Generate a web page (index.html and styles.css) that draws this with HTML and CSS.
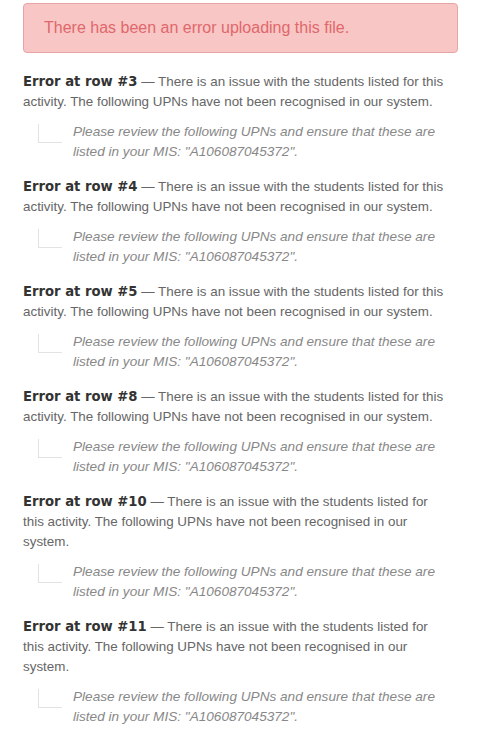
FILE: index.html
```html
<!DOCTYPE html>
<html lang="en">
<head>
    <meta charset="UTF-8">
    <meta name="viewport" content="width=device-width, initial-scale=1.0">
    <title>Upload errors</title>
    <link rel="stylesheet" href="styles.css">
</head>
<body>
    <main class="upload-errors">
        <div class="alert alert-danger">There has been an error uploading this file.</div>

        <div class="error-item">
            <p class="error-text"><strong>Error at row #3</strong> &mdash; There is an issue with the students listed for this activity. The following UPNs have not been recognised in our system.</p>
            <blockquote class="error-note"><span class="note-mark"></span><em>Please review the following UPNs and ensure that these are listed in your MIS: "A106087045372".</em></blockquote>
        </div>

        <div class="error-item">
            <p class="error-text"><strong>Error at row #4</strong> &mdash; There is an issue with the students listed for this activity. The following UPNs have not been recognised in our system.</p>
            <blockquote class="error-note"><span class="note-mark"></span><em>Please review the following UPNs and ensure that these are listed in your MIS: "A106087045372".</em></blockquote>
        </div>

        <div class="error-item">
            <p class="error-text"><strong>Error at row #5</strong> &mdash; There is an issue with the students listed for this activity. The following UPNs have not been recognised in our system.</p>
            <blockquote class="error-note"><span class="note-mark"></span><em>Please review the following UPNs and ensure that these are listed in your MIS: "A106087045372".</em></blockquote>
        </div>

        <div class="error-item">
            <p class="error-text"><strong>Error at row #8</strong> &mdash; There is an issue with the students listed for this activity. The following UPNs have not been recognised in our system.</p>
            <blockquote class="error-note"><span class="note-mark"></span><em>Please review the following UPNs and ensure that these are listed in your MIS: "A106087045372".</em></blockquote>
        </div>

        <div class="error-item">
            <p class="error-text"><strong>Error at row #10</strong> &mdash; There is an issue with the students listed for this activity. The following UPNs have not been recognised in our system.</p>
            <blockquote class="error-note"><span class="note-mark"></span><em>Please review the following UPNs and ensure that these are listed in your MIS: "A106087045372".</em></blockquote>
        </div>

        <div class="error-item">
            <p class="error-text"><strong>Error at row #11</strong> &mdash; There is an issue with the students listed for this activity. The following UPNs have not been recognised in our system.</p>
            <blockquote class="error-note"><span class="note-mark"></span><em>Please review the following UPNs and ensure that these are listed in your MIS: "A106087045372".</em></blockquote>
        </div>
    </main>
</body>
</html>
```

FILE: styles.css
```css
/* Upload error list */
html, body {
    margin: 0;
    padding: 0;
}

body {
    font-family: "Liberation Sans", Arial, sans-serif;
    font-size: 13.4px;
    line-height: 20px;
    color: #666;
    background: #fff;
}

.upload-errors {
    width: 435px;
    margin: 0 0 0 23px;
    padding-top: 3px;
}

.alert {
    border-radius: 4px;
    padding: 14px 20px 14px 20px;
    font-size: 16px;
    line-height: 20px;
}

.alert-danger {
    background-color: #f8c6c5; /* pale red */
    border: 1px solid #e8a4a4;
    color: #e0686b;
}

.error-item {
    width: 424px;
    margin-top: 19px;
}

.error-item + .error-item {
    margin-top: 15px;
}

.error-text {
    margin: 0;
}

.error-text strong {
    font-family: "DejaVu Sans", Verdana, sans-serif;
    font-size: 13.2px;
    font-weight: bold;
    color: #333;
}

.error-note {
    display: flex;
    align-items: flex-start;
    margin: 10px 0 0 15px;
    color: #888;
    font-size: 13.6px;
}

.note-mark {
    flex: none;
    width: 23px;
    height: 18px;
    margin-top: 2px;
    margin-right: 11px;
    border-left: 1px solid #e2e2e2;
    border-bottom: 1px solid #e2e2e2;
}
```
